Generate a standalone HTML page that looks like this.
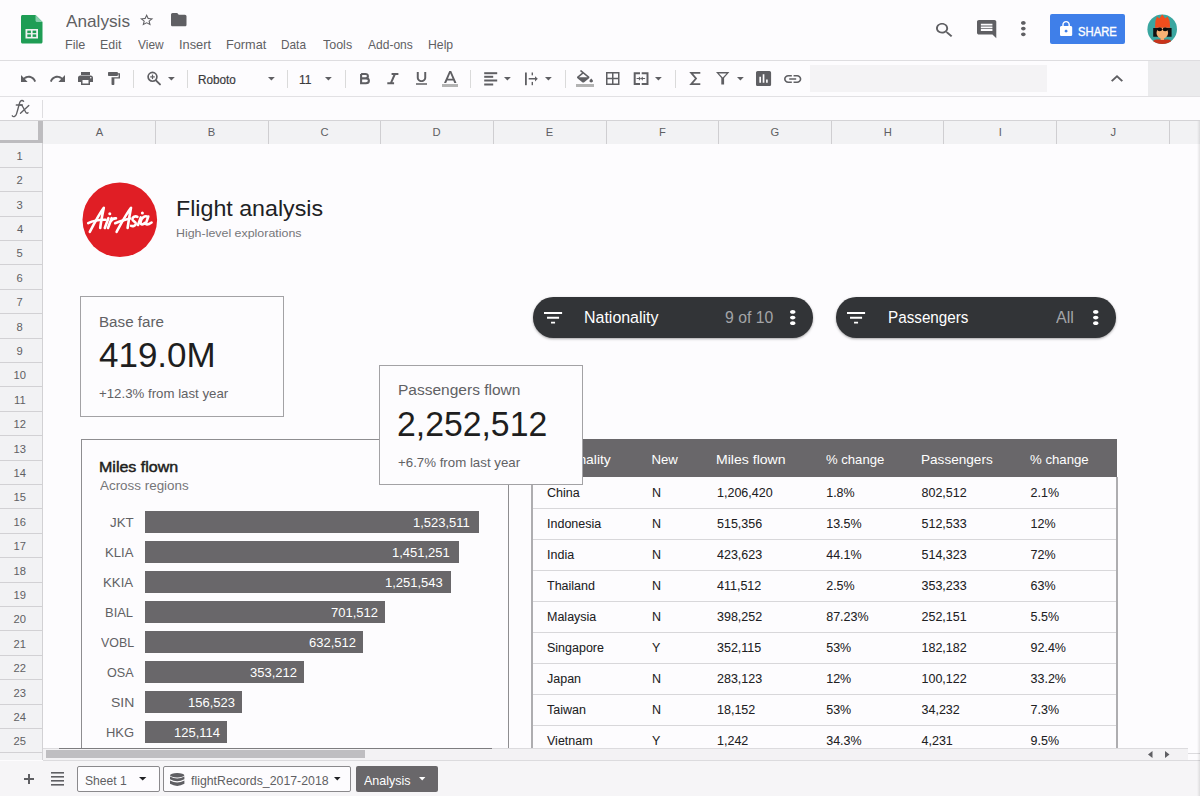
<!DOCTYPE html>
<html><head><meta charset="utf-8"><title>Analysis - Google Sheets</title>
<style>
html,body{margin:0;padding:0;width:1200px;height:796px;overflow:hidden;background:#fdfcfe;font-family:"Liberation Sans",sans-serif;}
.b{position:absolute;}
.ic{position:absolute;overflow:visible;}
.t{position:absolute;line-height:1;white-space:pre;font-family:"Liberation Sans",sans-serif;}
</style></head><body>
<svg class='ic' style='left:21px;top:15px;width:21.5px;height:28.5px' viewBox='0 0 21.5 28.5'>
<path d='M1.5 0H14.5L21.5 7V27C21.5 27.9 20.8 28.5 20 28.5H1.5C.7 28.5 0 27.9 0 27V1.5C0 .7 .7 0 1.5 0Z' fill='#1f9d55'/>
<path d='M14.5 0L21.5 7H16C15.2 7 14.5 6.3 14.5 5.5Z' fill='#87ceac'/>
<rect x='4.5' y='14' width='12.5' height='9.5' fill='#f1f1f1'/>
<rect x='6.3' y='15.6' width='3.6' height='2.5' fill='#1f9d55'/><rect x='11.6' y='15.6' width='3.6' height='2.5' fill='#1f9d55'/>
<rect x='6.3' y='19.4' width='3.6' height='2.5' fill='#1f9d55'/><rect x='11.6' y='19.4' width='3.6' height='2.5' fill='#1f9d55'/>
</svg>
<svg class='ic' style='left:140px;top:14.2px;width:13.300000000000011px;height:11.600000000000001px;' viewBox='2.05 2.05 19.9 18.9' preserveAspectRatio='none'><path d='M22 9.24l-7.19-.62L12 2 9.19 8.63 2 9.24l5.46 4.73L5.82 21 12 17.27 18.18 21l-1.63-7.03L22 9.24zM12 15.4l-3.76 2.27 1-4.28-3.32-2.88 4.38-.38L12 6.1l1.71 4.04 4.38.38-3.32 2.88 1 4.28L12 15.4z' fill='#5f5f63'/></svg>
<svg class='ic' style='left:170.8px;top:13px;width:15.5px;height:13.3px;' viewBox='2.0 4.0 20.0 16.0' preserveAspectRatio='none'><path d='M10 4H4c-1.1 0-1.99.9-1.99 2L2 18c0 1.1.9 2 2 2h16c1.1 0 2-.9 2-2V8c0-1.1-.9-2-2-2h-8l-2-2z' fill='#5f5f63'/></svg>
<svg class='ic' style='left:935.9px;top:22.5px;width:16.300000000000068px;height:14.0px;' viewBox='3.0 3.0 17.45 17.45' preserveAspectRatio='none'><path d='M15.5 14h-.79l-.28-.27C15.41 12.59 16 11.11 16 9.5 16 5.91 13.09 3 9.5 3S3 5.91 3 9.5 5.91 16 9.5 16c1.61 0 3.09-.59 4.23-1.57l.27.28v.79l5 4.99L20.49 19l-4.99-5zm-6 0C7.01 14 5 11.99 5 9.5S7.01 5 9.5 5 14 7.01 14 9.5 11.99 14 9.5 14z' fill='#5f5f63'/></svg>
<svg class='ic' style='left:976.5px;top:19.5px;width:19.299999999999955px;height:18.200000000000003px;' viewBox='2.0 2.0 20.0 19.95' preserveAspectRatio='none'><path d='M21.99 4c0-1.1-.89-2-1.99-2H4c-1.1 0-2 .9-2 2v12c0 1.1.9 2 2 2h14l4 4-.01-18zM18 14H6v-2h12v2zm0-3H6V9h12v2zm0-3H6V6h12v2z' fill='#5f5f63'/></svg>
<svg class='ic' style='left:1021px;top:21.3px;width:4.7000000000000455px;height:15.2px;' viewBox='10.0 4.0 4.0 16.0' preserveAspectRatio='none'><path d='M12 8c1.1 0 2-.9 2-2s-.9-2-2-2-2 .9-2 2 .9 2 2 2zm0 2c-1.1 0-2 .9-2 2s.9 2 2 2 2-.9 2-2-.9-2-2-2zm0 6c-1.1 0-2 .9-2 2s.9 2 2 2 2-.9 2-2-.9-2-2-2z' fill='#5f5f63'/></svg>
<div class='b' style='left:1050px;top:14px;width:75px;height:30px;background:#3f7fe9;border-radius:2px'></div>
<svg class='ic' style='left:1059.5px;top:20.9px;width:12.200000000000045px;height:15.100000000000001px;' viewBox='4.0 1.0 16.0 21.0' preserveAspectRatio='none'><path d='M18 8h-1V6c0-2.76-2.24-5-5-5S7 3.24 7 6v2H6c-1.1 0-2 .9-2 2v10c0 1.1.9 2 2 2h12c1.1 0 2-.9 2-2V10c0-1.1-.9-2-2-2zm-6 9c-1.1 0-2-.9-2-2s.9-2 2-2 2 .9 2 2-.9 2-2 2zm3.1-9H8.9V6c0-1.71 1.39-3.1 3.1-3.1 1.71 0 3.1 1.39 3.1 3.1v2z' fill='#fff'/></svg>
<svg class='ic' style='left:1147px;top:14px;width:30px;height:30px' viewBox='0 0 30 30'>
<defs><clipPath id='av'><circle cx='15.2' cy='15.2' r='14.8'/></clipPath></defs>
<g clip-path='url(#av)'>
<rect width='30' height='30' fill='#3aa6a0'/>
<path d='M6.2 14 H24.6 V22.7 H6.2Z' fill='#111'/>
<path d='M4.5 30 Q5.5 25.8 10 25.6 H20.5 Q25 25.8 26 30Z' fill='#c9331b'/>
<rect x='13.6' y='23' width='3.4' height='3' fill='#f3a96c'/>
<ellipse cx='15.3' cy='19' rx='5.8' ry='5.6' fill='#f7b274'/>
<path d='M8 13.8 L8.4 7 L10 2.6 L12.3 4.6 L15.2 0.3 L18.2 4.6 L20.6 2.6 L22.6 7 L23.2 13.8Z' fill='#f04d1d'/>
<ellipse cx='12.7' cy='15.4' rx='2.5' ry='1.8' fill='#0a0a0a'/><ellipse cx='18.1' cy='15.4' rx='2.5' ry='1.8' fill='#0a0a0a'/>
</g></svg>
<div class='b' style='left:0px;top:60px;width:1200px;height:1px;background:#dedde0'></div>
<div class='b' style='left:0px;top:96px;width:1200px;height:1px;background:#e2e1e4'></div>
<div class='b' style='left:1148px;top:61px;width:52px;height:35px;background:#ebebed'></div>
<div class='b' style='left:810px;top:64.5px;width:237px;height:27px;background:#f4f3f5'></div>
<svg class='ic' style='left:21.4px;top:74.5px;width:15.0px;height:6.900000000000006px;' viewBox='2.0 7.0 20.45 9.0' preserveAspectRatio='none'><path d='M12.5 8c-2.65 0-5.05.99-6.9 2.6L2 7v9h9l-3.62-3.62c1.39-1.16 3.16-1.88 5.12-1.88 3.54 0 6.550 2.31 7.6 5.5l2.37-.78C21.08 11.03 17.15 8 12.5 8z' fill='#5f5f63'/></svg>
<svg class='ic' style='left:50px;top:74.5px;width:15px;height:6.900000000000006px;' viewBox='1.55 7.0 20.45 9.0' preserveAspectRatio='none'><path d='M18.4 10.6C16.55 8.99 14.15 8 11.5 8c-4.65 0-8.58 3.03-9.96 7.22L3.9 16c1.05-3.19 4.05-5.5 7.6-5.5 1.95 0 3.73.72 5.12 1.880L13 16h9V7l-3.6 3.6z' fill='#5f5f63'/></svg>
<svg class='ic' style='left:78px;top:72px;width:15px;height:13px;' viewBox='2.0 3.0 20.0 18.0' preserveAspectRatio='none'><path d='M19 8H5c-1.66 0-3 1.34-3 3v6h4v4h12v-4h4v-6c0-1.66-1.34-3-3-3zm-3 11H8v-5h8v5zm3-7c-.55 0-1-.45-1-1s.45-1 1-1 1 .45 1 1-.45 1-1 1zm-1-9H6v4h12V3z' fill='#5f5f63'/></svg>
<svg class='ic' style='left:108px;top:72px;width:12px;height:13px;' viewBox='4.0 2.0 17.0 20.0' preserveAspectRatio='none'><path d='M18 4V3c0-.55-.45-1-1-1H5c-.55 0-1 .45-1 1v4c0 .55.45 1 1 1h12c.55 0 1-.45 1-1V6h1v4H9v11c0 .55.45 1 1 1h2c.55 0 1-.45 1-1v-9h8V4h-3z' fill='#5f5f63'/></svg>
<div class='b' style='left:133px;top:69.5px;width:1px;height:18px;background:#dadada'></div>
<div class='b' style='left:187px;top:69.5px;width:1px;height:18px;background:#dadada'></div>
<div class='b' style='left:287px;top:69.5px;width:1px;height:18px;background:#dadada'></div>
<div class='b' style='left:344.5px;top:69.5px;width:1px;height:18px;background:#dadada'></div>
<div class='b' style='left:469.5px;top:69.5px;width:1px;height:18px;background:#dadada'></div>
<div class='b' style='left:564.5px;top:69.5px;width:1px;height:18px;background:#dadada'></div>
<div class='b' style='left:675px;top:69.5px;width:1px;height:18px;background:#dadada'></div>
<svg class='ic' style='left:146px;top:70px;width:16px;height:16px' viewBox='0 0 16 16'><circle cx='6.5' cy='6.85' r='4.4' stroke='#5f5f63' stroke-width='1.7' fill='none'/><rect x='4.2' y='6.3' width='4.6' height='1.2' fill='#5f5f63'/><rect x='5.9' y='4.6' width='1.2' height='4.5' fill='#5f5f63'/><path d='M9.9 10.3L14 14.4' stroke='#5f5f63' stroke-width='1.9' stroke-linecap='round'/></svg>
<svg class='ic' style='left:167.6px;top:76.5px;width:6.800000000000011px;height:3.5px;' viewBox='7.0 10.0 10.0 5.0' preserveAspectRatio='none'><path d='M7 10l5 5 5-5z' fill='#5f5f63'/></svg>
<svg class='ic' style='left:267.5px;top:76.5px;width:6.800000000000011px;height:3.5px;' viewBox='7.0 10.0 10.0 5.0' preserveAspectRatio='none'><path d='M7 10l5 5 5-5z' fill='#5f5f63'/></svg>
<svg class='ic' style='left:325px;top:76.5px;width:6.800000000000011px;height:3.5px;' viewBox='7.0 10.0 10.0 5.0' preserveAspectRatio='none'><path d='M7 10l5 5 5-5z' fill='#5f5f63'/></svg>
<svg class='ic' style='left:503.7px;top:76.5px;width:6.800000000000011px;height:3.5px;' viewBox='7.0 10.0 10.0 5.0' preserveAspectRatio='none'><path d='M7 10l5 5 5-5z' fill='#5f5f63'/></svg>
<svg class='ic' style='left:545px;top:76.5px;width:6.7999999999999545px;height:3.5px;' viewBox='7.0 10.0 10.0 5.0' preserveAspectRatio='none'><path d='M7 10l5 5 5-5z' fill='#5f5f63'/></svg>
<svg class='ic' style='left:655px;top:76.5px;width:6.7999999999999545px;height:3.5px;' viewBox='7.0 10.0 10.0 5.0' preserveAspectRatio='none'><path d='M7 10l5 5 5-5z' fill='#5f5f63'/></svg>
<svg class='ic' style='left:736.8px;top:76.5px;width:6.7999999999999545px;height:3.5px;' viewBox='7.0 10.0 10.0 5.0' preserveAspectRatio='none'><path d='M7 10l5 5 5-5z' fill='#5f5f63'/></svg>
<svg class='ic' style='left:359.8px;top:72.5px;width:10px;height:11.3px' viewBox='0 0 10 11.3'><path d='M1.1 1V10.3H5.9C7.9 10.3 8.9 9.3 8.9 7.8C8.9 6.3 7.9 5.4 5.9 5.4H1.1M1.1 5.4H5.4C7 5.4 7.9 4.6 7.9 3.2C7.9 1.8 7 1 5.4 1H1.1' stroke='#5f5f63' stroke-width='2.1' fill='none'/></svg>
<svg class='ic' style='left:387.3px;top:72.5px;width:11.7px;height:11.3px' viewBox='0 0 11.7 11.3'><path d='M4.6 1H11.4M7.9 1L3.8 10.3M0.3 10.3H7.1' stroke='#5f5f63' stroke-width='2' fill='none'/></svg>
<svg class='ic' style='left:416px;top:72px;width:11px;height:12.75px;' viewBox='5.0 3.0 14.0 18.0' preserveAspectRatio='none'><path d='M12 17c3.31 0 6-2.69 6-6V3h-2.5v8c0 1.93-1.57 3.5-3.5 3.5S8.5 12.93 8.5 11V3H6v8c0 3.31 2.69 6 6 6zm-7 2v2h14v-2H5z' fill='#5f5f63'/></svg>
<svg class='ic' style='left:443.5px;top:71px;width:12.5px;height:12px;' viewBox='5.5 3.0 13.0 14.0' preserveAspectRatio='none'><path d='M11 3L5.5 17h2.25l1.12-3h6.25l1.12 3h2.25L13 3h-2zm-1.38 9L12 5.67 14.38 12H9.62z' fill='#5f5f63'/></svg>
<div class='b' style='left:441.5px;top:84px;width:16.5px;height:2.6px;background:#b3b3b3'></div>
<svg class='ic' style='left:483.5px;top:71.5px;width:14px;height:14px' viewBox='0 0 14 14'><rect x='.2' y='.2' width='13' height='2' fill='#5f5f63'/><rect x='.2' y='3.8' width='9' height='2' fill='#5f5f63'/><rect x='.2' y='7.5' width='13' height='2' fill='#5f5f63'/><rect x='.2' y='11.5' width='9' height='2' fill='#5f5f63'/></svg>
<svg class='ic' style='left:524px;top:71.5px;width:14px;height:13.5px' viewBox='0 0 14 13.5'>
<rect x='1' y='.5' width='1.8' height='12.7' fill='#5f5f63'/>
<rect x='7.6' y='.5' width='1.4' height='2.8' fill='#5f5f63'/><rect x='7.6' y='9.9' width='1.4' height='3.3' fill='#5f5f63'/>
<path d='M4.7 6.1H11V4.2L13.8 6.8 11 9.4V7.5H4.7Z' fill='#5f5f63'/></svg>
<svg class='ic' style='left:577px;top:70px;width:16px;height:12.5px;' viewBox='3.0 0.0 18.0 17.0' preserveAspectRatio='none'><path d='M16.56 8.94L7.62 0 6.21 1.41l2.38 2.38-5.15 5.15c-.59.59-.59 1.54 0 2.12l5.5 5.5c.29.29.68.44 1.06.44s.77-.15 1.06-.44l5.5-5.5c.59-.58.59-1.53 0-2.12zM5.21 10L10 5.21 14.79 10H5.21zM19 11.5s-2 2.17-2 3.5c0 1.1.9 2 2 2s2-.9 2-2c0-1.33-2-3.5-2-3.5z' fill='#5f5f63'/></svg>
<div class='b' style='left:576.4px;top:84px;width:17.3px;height:2.6px;background:#b3b3b3'></div>
<svg class='ic' style='left:606.3px;top:71.7px;width:13.5px;height:13.049999999999997px;' viewBox='3.0 3.0 18.0 18.0' preserveAspectRatio='none'><path d='M3 3v18h18V3H3zm8 16H5v-6h6v6zm0-8H5V5h6v6zm8 8h-6v-6h6v6zm0-8h-6V5h6v6z' fill='#5f5f63'/></svg>
<svg class='ic' style='left:633.3px;top:71.7px;width:15.7px;height:13px' viewBox='0 0 15.7 13'>
<path d='M7 .3H.7V12.9H7V10.9H2.7V2.3H7Z M8.7 .3H15.5V12.9H8.7V10.9H13.5V2.3H8.7Z' fill='#5f5f63'/>
<path d='M3.6 6.1H5.9V4.5L8 6.6 5.9 8.7V7.1H3.6Z M12.1 6.1H9.8V4.5L7.7 6.6 9.8 8.7V7.1H12.1Z' fill='#5f5f63'/></svg>
<svg class='ic' style='left:689.5px;top:72px;width:10.5px;height:13px' viewBox='0 0 10.5 13'><path d='M10.3 .9H1.2L6 6.5 1.2 12.1H10.3' stroke='#5f5f63' stroke-width='1.8' fill='none' stroke-linejoin='miter'/></svg>
<svg class='ic' style='left:716px;top:72px;width:13.4px;height:12.5px' viewBox='0 0 13.4 12.5'>
<path d='M0 0H13.4L8.1 6V12.5H5.3V6Z M2.9 1.6L6.7 5.6 10.5 1.6Z' fill='#5f5f63' fill-rule='evenodd'/></svg>
<svg class='ic' style='left:756.4px;top:70.8px;width:15.100000000000023px;height:15.100000000000009px;' viewBox='3.0 3.0 18.0 18.0' preserveAspectRatio='none'><path d='M19 3H5c-1.1 0-2 .9-2 2v14c0 1.1.9 2 2 2h14c1.1 0 2-.9 2-2V5c0-1.1-.9-2-2-2zM9 17H7v-7h2v7zm4 0h-2V7h2v10zm4 0h-2v-4h2v4z' fill='#5f5f63'/></svg>
<svg class='ic' style='left:784px;top:74.6px;width:17.399999999999977px;height:7.900000000000006px;' viewBox='2.0 7.0 20.0 10.0' preserveAspectRatio='none'><path d='M3.9 12c0-1.71 1.39-3.1 3.1-3.1h4V7H7c-2.76 0-5 2.24-5 5s2.24 5 5 5h4v-1.9H7c-1.71 0-3.1-1.39-3.1-3.1zM8 13h8v-2H8v2zm9-6h-4v1.9h4c1.71 0 3.1 1.39 3.1 3.1s-1.39 3.1-3.1 3.1h-4V17h4c2.76 0 5-2.24 5-5s-2.24-5-5-5z' fill='#5f5f63'/></svg>
<svg class='ic' style='left:1110.7px;top:75px;width:12.0px;height:6.700000000000003px;' viewBox='6.0 8.0 12.0 7.4' preserveAspectRatio='none'><path d='M12 8l-6 6 1.41 1.41L12 10.83l4.59 4.58L18 14z' fill='#5f5f63'/></svg>
<svg class='ic' style='left:0;top:90px;width:60px;height:35px' viewBox='0 90 60 35'><g stroke='#5f5f63' stroke-width='1.35' fill='none' stroke-linecap='round'><path d='M23.6 101.3C22.8 100.1 20.6 100 19.8 102.2C19 104.5 17.8 110 16.6 113.6C15.8 116.2 13.6 117.6 12.3 115.8'/><path d='M16.3 105H22.4'/><path d='M20 105.2C21.3 104.6 22 105 22.8 106.8L25.6 112C26.3 113.3 27.2 113.6 28 112.8'/><path d='M28.8 105.4L20.5 113.2'/></g></svg>
<div class='b' style='left:42px;top:100px;width:1px;height:18px;background:#dedde0'></div>
<div class='b' style='left:0px;top:120px;width:1200px;height:1px;background:#d4d3d6'></div>
<div class='b' style='left:0px;top:121px;width:1200px;height:22.6px;background:#f2f2f4'></div>
<div class='b' style='left:0px;top:143px;width:42px;height:617px;background:#f2f2f4'></div>
<div class='b' style='left:42px;top:143px;width:1px;height:617px;background:#d2d1d4'></div>
<div class='b' style='left:38.3px;top:121px;width:4.5px;height:22.4px;background:#bdbcbf'></div>
<div class='b' style='left:0px;top:139.5px;width:42.8px;height:3.6px;background:#bdbcbf'></div>
<div class='b' style='left:155.0px;top:121px;width:1px;height:22.6px;background:#cfced1'></div>
<div class='b' style='left:267.64px;top:121px;width:1px;height:22.6px;background:#cfced1'></div>
<div class='b' style='left:380.28px;top:121px;width:1px;height:22.6px;background:#cfced1'></div>
<div class='b' style='left:492.92px;top:121px;width:1px;height:22.6px;background:#cfced1'></div>
<div class='b' style='left:605.56px;top:121px;width:1px;height:22.6px;background:#cfced1'></div>
<div class='b' style='left:718.2px;top:121px;width:1px;height:22.6px;background:#cfced1'></div>
<div class='b' style='left:830.84px;top:121px;width:1px;height:22.6px;background:#cfced1'></div>
<div class='b' style='left:943.48px;top:121px;width:1px;height:22.6px;background:#cfced1'></div>
<div class='b' style='left:1056.12px;top:121px;width:1px;height:22.6px;background:#cfced1'></div>
<div class='b' style='left:1168.76px;top:121px;width:1px;height:22.6px;background:#cfced1'></div>
<div class='b' style='left:0px;top:166.7px;width:42px;height:1px;background:#d2d1d4'></div>
<div class='b' style='left:0px;top:191.1px;width:42px;height:1px;background:#d2d1d4'></div>
<div class='b' style='left:0px;top:215.5px;width:42px;height:1px;background:#d2d1d4'></div>
<div class='b' style='left:0px;top:239.9px;width:42px;height:1px;background:#d2d1d4'></div>
<div class='b' style='left:0px;top:264.3px;width:42px;height:1px;background:#d2d1d4'></div>
<div class='b' style='left:0px;top:288.7px;width:42px;height:1px;background:#d2d1d4'></div>
<div class='b' style='left:0px;top:313.1px;width:42px;height:1px;background:#d2d1d4'></div>
<div class='b' style='left:0px;top:337.5px;width:42px;height:1px;background:#d2d1d4'></div>
<div class='b' style='left:0px;top:361.9px;width:42px;height:1px;background:#d2d1d4'></div>
<div class='b' style='left:0px;top:386.3px;width:42px;height:1px;background:#d2d1d4'></div>
<div class='b' style='left:0px;top:410.7px;width:42px;height:1px;background:#d2d1d4'></div>
<div class='b' style='left:0px;top:435.1px;width:42px;height:1px;background:#d2d1d4'></div>
<div class='b' style='left:0px;top:459.5px;width:42px;height:1px;background:#d2d1d4'></div>
<div class='b' style='left:0px;top:483.9px;width:42px;height:1px;background:#d2d1d4'></div>
<div class='b' style='left:0px;top:508.3px;width:42px;height:1px;background:#d2d1d4'></div>
<div class='b' style='left:0px;top:532.7px;width:42px;height:1px;background:#d2d1d4'></div>
<div class='b' style='left:0px;top:557.1px;width:42px;height:1px;background:#d2d1d4'></div>
<div class='b' style='left:0px;top:581.5px;width:42px;height:1px;background:#d2d1d4'></div>
<div class='b' style='left:0px;top:605.9px;width:42px;height:1px;background:#d2d1d4'></div>
<div class='b' style='left:0px;top:630.3px;width:42px;height:1px;background:#d2d1d4'></div>
<div class='b' style='left:0px;top:654.7px;width:42px;height:1px;background:#d2d1d4'></div>
<div class='b' style='left:0px;top:679.1px;width:42px;height:1px;background:#d2d1d4'></div>
<div class='b' style='left:0px;top:703.5px;width:42px;height:1px;background:#d2d1d4'></div>
<div class='b' style='left:0px;top:727.9px;width:42px;height:1px;background:#d2d1d4'></div>
<div class='b' style='left:0px;top:752.3px;width:42px;height:1px;background:#d2d1d4'></div>
<svg class='ic' style='left:0;top:0;width:1200px;height:300px' viewBox='0 0 1200 300'>
<circle cx='119.8' cy='219.8' r='37.3' fill='#e01e25'/>
<g stroke='#fff' stroke-width='2.6' fill='none' stroke-linecap='round' stroke-linejoin='round'>
<path d='M89.8 231.8 C95 222 99.5 213.5 103.8 207.8 C102.5 214 101 221 100.2 228'/>
<path d='M88.2 223.2 C93 220.8 99 219.6 105.5 219.8'/>
<path d='M108.4 218.2 L104.8 228'/>
<path d='M111.6 218.2 L108 228 M110.4 221.8 C111.8 219.2 113.5 218 116 218.4'/>
<path d='M116.6 231.8 C122 222 126.5 213.5 131 207.8 C129.8 214 128.6 221 127.6 228'/>
<path d='M115.2 223.2 C120 221.4 125 219.6 130 218.6'/>
<path d='M137.4 216.9 C135.4 215.7 132.2 216.9 132.4 219.4 C132.6 221.4 136.2 221.6 135.8 224 C135.4 226.1 132.6 226.5 131.1 225.9'/>
<path d='M140.8 217.4 L138 225'/>
<path d='M147.8 216.8 C145 215.2 141.4 217.6 140.7 221.4 C140.1 224.4 142.4 225.4 144.8 222.9 M148.3 216.5 L146 223.2 C145.6 224.9 147.6 225.3 151.6 222.5'/>
</g>
<circle cx='109.8' cy='213.8' r='1.5' fill='#fff'/><circle cx='142.4' cy='213' r='1.5' fill='#fff'/>
</svg>
<div class='b' style='left:80.35px;top:296.2px;width:203.9px;height:120.9px;border:1.3px solid #a3a2a5;box-sizing:border-box'></div>
<div class='b' style='left:532.5px;top:297px;width:280.5px;height:40.5px;background:#323437;border-radius:20.25px;box-shadow:0 1px 2.5px rgba(0,0,0,0.35)'></div>
<div class='b' style='left:835.5px;top:297px;width:280.75px;height:40.5px;background:#323437;border-radius:20.25px;box-shadow:0 1px 2.5px rgba(0,0,0,0.35)'></div>
<svg class='ic' style='left:544px;top:311.6px;width:18.100000000000023px;height:11.599999999999966px;' viewBox='3.0 6.0 18.0 12.0' preserveAspectRatio='none'><path d='M10 18h4v-2h-4v2zM3 6v2h18V6H3zm3 7h12v-2H6v2z' fill='#fff'/></svg>
<svg class='ic' style='left:847px;top:311.6px;width:18.100000000000023px;height:11.599999999999966px;' viewBox='3.0 6.0 18.0 12.0' preserveAspectRatio='none'><path d='M10 18h4v-2h-4v2zM3 6v2h18V6H3zm3 7h12v-2H6v2z' fill='#fff'/></svg>
<svg class='ic' style='left:789.5px;top:310px;width:5.5px;height:15px;' viewBox='10.0 4.0 4.0 16.0' preserveAspectRatio='none'><path d='M12 8c1.1 0 2-.9 2-2s-.9-2-2-2-2 .9-2 2 .9 2 2 2zm0 2c-1.1 0-2 .9-2 2s.9 2 2 2 2-.9 2-2-.9-2-2-2zm0 6c-1.1 0-2 .9-2 2s.9 2 2 2 2-.9 2-2-.9-2-2-2z' fill='#fff'/></svg>
<svg class='ic' style='left:1093px;top:310px;width:5.5px;height:15px;' viewBox='10.0 4.0 4.0 16.0' preserveAspectRatio='none'><path d='M12 8c1.1 0 2-.9 2-2s-.9-2-2-2-2 .9-2 2 .9 2 2 2zm0 2c-1.1 0-2 .9-2 2s.9 2 2 2 2-.9 2-2-.9-2-2-2zm0 6c-1.1 0-2 .9-2 2s.9 2 2 2 2-.9 2-2-.9-2-2-2z' fill='#fff'/></svg>
<div class='b' style='left:80.75px;top:439.1px;width:428.3px;height:320px;border:1.3px solid #8e8d90;border-bottom:none;box-sizing:border-box'></div>
<div class='b' style='left:144.8px;top:510.9px;width:334.0px;height:21.8px;background:#69676a'></div>
<div class='b' style='left:144.8px;top:540.9px;width:314.2px;height:21.8px;background:#69676a'></div>
<div class='b' style='left:144.8px;top:570.9px;width:305.8px;height:21.8px;background:#69676a'></div>
<div class='b' style='left:144.8px;top:600.9px;width:240.09999999999997px;height:21.8px;background:#69676a'></div>
<div class='b' style='left:144.8px;top:630.9px;width:218.45px;height:21.8px;background:#69676a'></div>
<div class='b' style='left:144.8px;top:660.9px;width:159.2px;height:21.8px;background:#69676a'></div>
<div class='b' style='left:144.8px;top:690.9px;width:97.19999999999999px;height:21.8px;background:#69676a'></div>
<div class='b' style='left:144.8px;top:720.9px;width:82.19999999999999px;height:21.8px;background:#69676a'></div>
<div class='b' style='left:532px;top:439.4px;width:585px;height:37.8px;background:#69676a'></div>
<div class='b' style='left:531px;top:477px;width:1.6px;height:272px;background:#aeadb0'></div>
<div class='b' style='left:1116.3px;top:477px;width:1.6px;height:272px;background:#aeadb0'></div>
<div class='b' style='left:532.6px;top:507.6px;width:583.7px;height:1px;background:#d8d7da'></div>
<div class='b' style='left:532.6px;top:538.6px;width:583.7px;height:1px;background:#d8d7da'></div>
<div class='b' style='left:532.6px;top:569.6px;width:583.7px;height:1px;background:#d8d7da'></div>
<div class='b' style='left:532.6px;top:600.6px;width:583.7px;height:1px;background:#d8d7da'></div>
<div class='b' style='left:532.6px;top:631.6px;width:583.7px;height:1px;background:#d8d7da'></div>
<div class='b' style='left:532.6px;top:662.6px;width:583.7px;height:1px;background:#d8d7da'></div>
<div class='b' style='left:532.6px;top:693.6px;width:583.7px;height:1px;background:#d8d7da'></div>
<div class='b' style='left:532.6px;top:724.6px;width:583.7px;height:1px;background:#d8d7da'></div>
<span class='t' style='left:66.30px;top:14.00px;font-size:16.96px;font-weight:400;color:#5f6063;transform:scaleX(1.0145);transform-origin:0 0;'>Analysis</span>
<span class='t' style='left:65.26px;top:39.20px;font-size:12.17px;font-weight:400;color:#5f6063;transform:scaleX(1.0389);transform-origin:0 0;'>File</span>
<span class='t' style='left:99.78px;top:39.20px;font-size:12.17px;font-weight:400;color:#5f6063;transform:scaleX(1.0200);transform-origin:0 0;'>Edit</span>
<span class='t' style='left:137.50px;top:39.20px;font-size:12.17px;font-weight:400;color:#5f6063;transform:scaleX(0.9808);transform-origin:0 0;'>View</span>
<span class='t' style='left:178.64px;top:39.20px;font-size:12.17px;font-weight:400;color:#5f6063;transform:scaleX(1.0552);transform-origin:0 0;'>Insert</span>
<span class='t' style='left:225.65px;top:39.20px;font-size:12.17px;font-weight:400;color:#5f6063;transform:scaleX(1.0459);transform-origin:0 0;'>Format</span>
<span class='t' style='left:280.53px;top:39.20px;font-size:12.17px;font-weight:400;color:#5f6063;transform:scaleX(0.9720);transform-origin:0 0;'>Data</span>
<span class='t' style='left:322.50px;top:39.20px;font-size:12.17px;font-weight:400;color:#5f6063;transform:scaleX(1.0268);transform-origin:0 0;'>Tools</span>
<span class='t' style='left:367.50px;top:39.20px;font-size:12.17px;font-weight:400;color:#5f6063;transform:scaleX(0.9889);transform-origin:0 0;'>Add-ons</span>
<span class='t' style='left:427.74px;top:39.20px;font-size:12.17px;font-weight:400;color:#5f6063;transform:scaleX(1.0062);transform-origin:0 0;'>Help</span>
<span class='t' style='left:1077.82px;top:26.00px;font-size:12.75px;font-weight:400;color:#fff;transform:scaleX(0.8837);transform-origin:0 0;-webkit-text-stroke:0.35px currentColor;'>SHARE</span>
<span class='t' style='left:198.36px;top:74.20px;font-size:12.46px;font-weight:400;color:#3a3a3c;transform:scaleX(0.9410);transform-origin:0 0;-webkit-text-stroke:0.2px currentColor;'>Roboto</span>
<span class='t' style='left:299.04px;top:74.20px;font-size:12.46px;font-weight:400;color:#3a3a3c;transform:scaleX(0.9636);transform-origin:0 0;-webkit-text-stroke:0.2px currentColor;'>11</span>
<span class='t' style='left:95.68px;top:127.00px;font-size:11.2px;font-weight:400;color:#5f5f63;'>A</span>
<span class='t' style='left:207.82px;top:127.00px;font-size:11.2px;font-weight:400;color:#5f5f63;'>B</span>
<span class='t' style='left:320.46px;top:127.00px;font-size:11.2px;font-weight:400;color:#5f5f63;'>C</span>
<span class='t' style='left:432.60px;top:127.00px;font-size:11.2px;font-weight:400;color:#5f5f63;'>D</span>
<span class='t' style='left:545.74px;top:127.00px;font-size:11.2px;font-weight:400;color:#5f5f63;'>E</span>
<span class='t' style='left:658.88px;top:127.00px;font-size:11.2px;font-weight:400;color:#5f5f63;'>F</span>
<span class='t' style='left:770.52px;top:127.00px;font-size:11.2px;font-weight:400;color:#5f5f63;'>G</span>
<span class='t' style='left:883.66px;top:127.00px;font-size:11.2px;font-weight:400;color:#5f5f63;'>H</span>
<span class='t' style='left:998.80px;top:127.00px;font-size:11.2px;font-weight:400;color:#5f5f63;'>I</span>
<span class='t' style='left:1110.44px;top:127.00px;font-size:11.2px;font-weight:400;color:#5f5f63;'>J</span>
<span class='t' style='left:16.50px;top:150.80px;font-size:11.2px;font-weight:400;color:#5f5f63;'>1</span>
<span class='t' style='left:16.50px;top:175.20px;font-size:11.2px;font-weight:400;color:#5f5f63;'>2</span>
<span class='t' style='left:16.50px;top:199.60px;font-size:11.2px;font-weight:400;color:#5f5f63;'>3</span>
<span class='t' style='left:17.00px;top:224.00px;font-size:11.2px;font-weight:400;color:#5f5f63;'>4</span>
<span class='t' style='left:16.50px;top:248.40px;font-size:11.2px;font-weight:400;color:#5f5f63;'>5</span>
<span class='t' style='left:16.50px;top:272.80px;font-size:11.2px;font-weight:400;color:#5f5f63;'>6</span>
<span class='t' style='left:16.50px;top:297.20px;font-size:11.2px;font-weight:400;color:#5f5f63;'>7</span>
<span class='t' style='left:16.50px;top:321.60px;font-size:11.2px;font-weight:400;color:#5f5f63;'>8</span>
<span class='t' style='left:16.50px;top:346.00px;font-size:11.2px;font-weight:400;color:#5f5f63;'>9</span>
<span class='t' style='left:13.50px;top:370.40px;font-size:11.2px;font-weight:400;color:#5f5f63;'>10</span>
<span class='t' style='left:14.00px;top:394.80px;font-size:11.2px;font-weight:400;color:#5f5f63;'>11</span>
<span class='t' style='left:13.50px;top:419.20px;font-size:11.2px;font-weight:400;color:#5f5f63;'>12</span>
<span class='t' style='left:13.50px;top:443.60px;font-size:11.2px;font-weight:400;color:#5f5f63;'>13</span>
<span class='t' style='left:13.50px;top:468.00px;font-size:11.2px;font-weight:400;color:#5f5f63;'>14</span>
<span class='t' style='left:13.50px;top:492.40px;font-size:11.2px;font-weight:400;color:#5f5f63;'>15</span>
<span class='t' style='left:13.50px;top:516.80px;font-size:11.2px;font-weight:400;color:#5f5f63;'>16</span>
<span class='t' style='left:13.50px;top:541.20px;font-size:11.2px;font-weight:400;color:#5f5f63;'>17</span>
<span class='t' style='left:13.50px;top:565.60px;font-size:11.2px;font-weight:400;color:#5f5f63;'>18</span>
<span class='t' style='left:13.50px;top:590.00px;font-size:11.2px;font-weight:400;color:#5f5f63;'>19</span>
<span class='t' style='left:13.50px;top:614.40px;font-size:11.2px;font-weight:400;color:#5f5f63;'>20</span>
<span class='t' style='left:13.50px;top:638.80px;font-size:11.2px;font-weight:400;color:#5f5f63;'>21</span>
<span class='t' style='left:13.50px;top:663.20px;font-size:11.2px;font-weight:400;color:#5f5f63;'>22</span>
<span class='t' style='left:13.50px;top:687.60px;font-size:11.2px;font-weight:400;color:#5f5f63;'>23</span>
<span class='t' style='left:13.50px;top:712.00px;font-size:11.2px;font-weight:400;color:#5f5f63;'>24</span>
<span class='t' style='left:13.50px;top:736.40px;font-size:11.2px;font-weight:400;color:#5f5f63;'>25</span>
<span class='t' style='left:175.95px;top:198.00px;font-size:22.61px;font-weight:400;color:#202124;transform:scaleX(1.0262);transform-origin:0 0;'>Flight analysis</span>
<span class='t' style='left:175.93px;top:228.30px;font-size:11.59px;font-weight:400;color:#76767a;transform:scaleX(1.0716);transform-origin:0 0;'>High-level explorations</span>
<span class='t' style='left:99.32px;top:313.70px;font-size:15.51px;font-weight:400;color:#616164;transform:scaleX(0.9785);transform-origin:0 0;'>Base fare</span>
<span class='t' style='left:99.29px;top:338.00px;font-size:34.49px;font-weight:400;color:#1e1e20;transform:scaleX(1.0144);transform-origin:0 0;'>419.0M</span>
<span class='t' style='left:98.76px;top:387.20px;font-size:13.33px;font-weight:400;color:#616164;transform:scaleX(0.9942);transform-origin:0 0;'>+12.3% from last year</span>
<span class='t' style='left:583.98px;top:310.25px;font-size:15.58px;font-weight:400;color:#ffffff;transform:scaleX(1.0243);transform-origin:0 0;'>Nationality</span>
<span class='t' style='left:724.99px;top:310.25px;font-size:15.58px;font-weight:400;color:#a3a4a7;transform:scaleX(1.0109);transform-origin:0 0;'>9 of 10</span>
<span class='t' style='left:887.77px;top:310.25px;font-size:15.58px;font-weight:400;color:#ffffff;transform:scaleX(0.9784);transform-origin:0 0;'>Passengers</span>
<span class='t' style='left:1056.00px;top:310.25px;font-size:15.58px;font-weight:400;color:#a3a4a7;transform:scaleX(1.0312);transform-origin:0 0;'>All</span>
<span class='t' style='left:98.86px;top:459.70px;font-size:14.06px;font-weight:400;color:#1e1e20;transform:scaleX(1.1397);transform-origin:0 0;-webkit-text-stroke:0.45px currentColor;'>Miles flown</span>
<span class='t' style='left:100.00px;top:479.50px;font-size:12.61px;font-weight:400;color:#757578;transform:scaleX(1.0639);transform-origin:0 0;'>Across regions</span>
<span class='t' style='left:110.00px;top:515.70px;font-size:13.33px;font-weight:400;color:#616164;'>JKT</span>
<span class='t' style='left:412.94px;top:515.80px;font-size:13.4px;font-weight:400;color:#ffffff;transform:scaleX(0.9700);transform-origin:0 0;'>1,523,511</span>
<span class='t' style='left:104.52px;top:545.70px;font-size:13.33px;font-weight:400;color:#616164;transform:scaleX(0.9821);transform-origin:0 0;'>KLIA</span>
<span class='t' style='left:392.27px;top:545.80px;font-size:13.4px;font-weight:400;color:#ffffff;transform:scaleX(0.9700);transform-origin:0 0;'>1,451,251</span>
<span class='t' style='left:103.21px;top:575.70px;font-size:13.33px;font-weight:400;color:#616164;transform:scaleX(0.9931);transform-origin:0 0;'>KKIA</span>
<span class='t' style='left:385.17px;top:575.80px;font-size:13.4px;font-weight:400;color:#ffffff;transform:scaleX(0.9700);transform-origin:0 0;'>1,251,543</span>
<span class='t' style='left:104.83px;top:605.70px;font-size:13.33px;font-weight:400;color:#616164;transform:scaleX(0.9714);transform-origin:0 0;'>BIAL</span>
<span class='t' style='left:330.64px;top:605.80px;font-size:13.4px;font-weight:400;color:#ffffff;transform:scaleX(0.9700);transform-origin:0 0;'>701,512</span>
<span class='t' style='left:100.50px;top:635.70px;font-size:13.33px;font-weight:400;color:#616164;transform:scaleX(0.9286);transform-origin:0 0;'>VOBL</span>
<span class='t' style='left:308.94px;top:635.80px;font-size:13.4px;font-weight:400;color:#ffffff;transform:scaleX(0.9700);transform-origin:0 0;'>632,512</span>
<span class='t' style='left:106.56px;top:665.70px;font-size:13.33px;font-weight:400;color:#616164;transform:scaleX(0.9444);transform-origin:0 0;'>OSA</span>
<span class='t' style='left:249.69px;top:665.80px;font-size:13.4px;font-weight:400;color:#ffffff;transform:scaleX(0.9700);transform-origin:0 0;'>353,212</span>
<span class='t' style='left:110.95px;top:695.70px;font-size:13.33px;font-weight:400;color:#616164;transform:scaleX(1.0500);transform-origin:0 0;'>SIN</span>
<span class='t' style='left:187.69px;top:695.80px;font-size:13.4px;font-weight:400;color:#ffffff;transform:scaleX(0.9700);transform-origin:0 0;'>156,523</span>
<span class='t' style='left:105.78px;top:725.70px;font-size:13.33px;font-weight:400;color:#616164;transform:scaleX(0.9722);transform-origin:0 0;'>HKG</span>
<span class='t' style='left:173.66px;top:725.80px;font-size:13.4px;font-weight:400;color:#ffffff;transform:scaleX(0.9700);transform-origin:0 0;'>125,114</span>
<span class='t' style='left:546.45px;top:452.80px;font-size:13.19px;font-weight:400;color:#ffffff;transform:scaleX(1.0525);transform-origin:0 0;'>Nationality</span>
<span class='t' style='left:651.50px;top:452.80px;font-size:13.19px;font-weight:400;color:#ffffff;'>New</span>
<span class='t' style='left:716.43px;top:452.80px;font-size:13.19px;font-weight:400;color:#ffffff;transform:scaleX(1.0672);transform-origin:0 0;'>Miles flown</span>
<span class='t' style='left:825.71px;top:452.80px;font-size:13.19px;font-weight:400;color:#ffffff;transform:scaleX(0.9930);transform-origin:0 0;'>% change</span>
<span class='t' style='left:920.97px;top:452.80px;font-size:13.19px;font-weight:400;color:#ffffff;transform:scaleX(1.0294);transform-origin:0 0;'>Passengers</span>
<span class='t' style='left:1030.00px;top:452.80px;font-size:13.19px;font-weight:400;color:#ffffff;'>% change</span>
<span class='t' style='left:547.00px;top:487.10px;font-size:12.5px;font-weight:400;color:#202022;-webkit-text-stroke:0.05px currentColor;'>China</span>
<span class='t' style='left:652.00px;top:487.10px;font-size:12.5px;font-weight:400;color:#202022;-webkit-text-stroke:0.05px currentColor;'>N</span>
<span class='t' style='left:717.00px;top:487.10px;font-size:12.5px;font-weight:400;color:#202022;-webkit-text-stroke:0.05px currentColor;'>1,206,420</span>
<span class='t' style='left:826.20px;top:487.10px;font-size:12.5px;font-weight:400;color:#202022;-webkit-text-stroke:0.05px currentColor;'>1.8%</span>
<span class='t' style='left:921.50px;top:487.10px;font-size:12.5px;font-weight:400;color:#202022;-webkit-text-stroke:0.05px currentColor;'>802,512</span>
<span class='t' style='left:1030.50px;top:487.10px;font-size:12.5px;font-weight:400;color:#202022;-webkit-text-stroke:0.05px currentColor;'>2.1%</span>
<span class='t' style='left:547.00px;top:518.10px;font-size:12.5px;font-weight:400;color:#202022;-webkit-text-stroke:0.05px currentColor;'>Indonesia</span>
<span class='t' style='left:652.00px;top:518.10px;font-size:12.5px;font-weight:400;color:#202022;-webkit-text-stroke:0.05px currentColor;'>N</span>
<span class='t' style='left:717.00px;top:518.10px;font-size:12.5px;font-weight:400;color:#202022;-webkit-text-stroke:0.05px currentColor;'>515,356</span>
<span class='t' style='left:826.20px;top:518.10px;font-size:12.5px;font-weight:400;color:#202022;-webkit-text-stroke:0.05px currentColor;'>13.5%</span>
<span class='t' style='left:921.50px;top:518.10px;font-size:12.5px;font-weight:400;color:#202022;-webkit-text-stroke:0.05px currentColor;'>512,533</span>
<span class='t' style='left:1030.50px;top:518.10px;font-size:12.5px;font-weight:400;color:#202022;-webkit-text-stroke:0.05px currentColor;'>12%</span>
<span class='t' style='left:547.00px;top:549.10px;font-size:12.5px;font-weight:400;color:#202022;-webkit-text-stroke:0.05px currentColor;'>India</span>
<span class='t' style='left:652.00px;top:549.10px;font-size:12.5px;font-weight:400;color:#202022;-webkit-text-stroke:0.05px currentColor;'>N</span>
<span class='t' style='left:717.00px;top:549.10px;font-size:12.5px;font-weight:400;color:#202022;-webkit-text-stroke:0.05px currentColor;'>423,623</span>
<span class='t' style='left:826.20px;top:549.10px;font-size:12.5px;font-weight:400;color:#202022;-webkit-text-stroke:0.05px currentColor;'>44.1%</span>
<span class='t' style='left:921.50px;top:549.10px;font-size:12.5px;font-weight:400;color:#202022;-webkit-text-stroke:0.05px currentColor;'>514,323</span>
<span class='t' style='left:1030.50px;top:549.10px;font-size:12.5px;font-weight:400;color:#202022;-webkit-text-stroke:0.05px currentColor;'>72%</span>
<span class='t' style='left:547.00px;top:580.10px;font-size:12.5px;font-weight:400;color:#202022;-webkit-text-stroke:0.05px currentColor;'>Thailand</span>
<span class='t' style='left:652.00px;top:580.10px;font-size:12.5px;font-weight:400;color:#202022;-webkit-text-stroke:0.05px currentColor;'>N</span>
<span class='t' style='left:717.00px;top:580.10px;font-size:12.5px;font-weight:400;color:#202022;-webkit-text-stroke:0.05px currentColor;'>411,512</span>
<span class='t' style='left:826.20px;top:580.10px;font-size:12.5px;font-weight:400;color:#202022;-webkit-text-stroke:0.05px currentColor;'>2.5%</span>
<span class='t' style='left:921.50px;top:580.10px;font-size:12.5px;font-weight:400;color:#202022;-webkit-text-stroke:0.05px currentColor;'>353,233</span>
<span class='t' style='left:1030.50px;top:580.10px;font-size:12.5px;font-weight:400;color:#202022;-webkit-text-stroke:0.05px currentColor;'>63%</span>
<span class='t' style='left:547.00px;top:611.10px;font-size:12.5px;font-weight:400;color:#202022;-webkit-text-stroke:0.05px currentColor;'>Malaysia</span>
<span class='t' style='left:652.00px;top:611.10px;font-size:12.5px;font-weight:400;color:#202022;-webkit-text-stroke:0.05px currentColor;'>N</span>
<span class='t' style='left:717.00px;top:611.10px;font-size:12.5px;font-weight:400;color:#202022;-webkit-text-stroke:0.05px currentColor;'>398,252</span>
<span class='t' style='left:826.20px;top:611.10px;font-size:12.5px;font-weight:400;color:#202022;-webkit-text-stroke:0.05px currentColor;'>87.23%</span>
<span class='t' style='left:921.50px;top:611.10px;font-size:12.5px;font-weight:400;color:#202022;-webkit-text-stroke:0.05px currentColor;'>252,151</span>
<span class='t' style='left:1030.50px;top:611.10px;font-size:12.5px;font-weight:400;color:#202022;-webkit-text-stroke:0.05px currentColor;'>5.5%</span>
<span class='t' style='left:547.00px;top:642.10px;font-size:12.5px;font-weight:400;color:#202022;-webkit-text-stroke:0.05px currentColor;'>Singapore</span>
<span class='t' style='left:652.00px;top:642.10px;font-size:12.5px;font-weight:400;color:#202022;-webkit-text-stroke:0.05px currentColor;'>Y</span>
<span class='t' style='left:717.00px;top:642.10px;font-size:12.5px;font-weight:400;color:#202022;-webkit-text-stroke:0.05px currentColor;'>352,115</span>
<span class='t' style='left:826.20px;top:642.10px;font-size:12.5px;font-weight:400;color:#202022;-webkit-text-stroke:0.05px currentColor;'>53%</span>
<span class='t' style='left:921.50px;top:642.10px;font-size:12.5px;font-weight:400;color:#202022;-webkit-text-stroke:0.05px currentColor;'>182,182</span>
<span class='t' style='left:1030.50px;top:642.10px;font-size:12.5px;font-weight:400;color:#202022;-webkit-text-stroke:0.05px currentColor;'>92.4%</span>
<span class='t' style='left:547.00px;top:673.10px;font-size:12.5px;font-weight:400;color:#202022;-webkit-text-stroke:0.05px currentColor;'>Japan</span>
<span class='t' style='left:652.00px;top:673.10px;font-size:12.5px;font-weight:400;color:#202022;-webkit-text-stroke:0.05px currentColor;'>N</span>
<span class='t' style='left:717.00px;top:673.10px;font-size:12.5px;font-weight:400;color:#202022;-webkit-text-stroke:0.05px currentColor;'>283,123</span>
<span class='t' style='left:826.20px;top:673.10px;font-size:12.5px;font-weight:400;color:#202022;-webkit-text-stroke:0.05px currentColor;'>12%</span>
<span class='t' style='left:921.50px;top:673.10px;font-size:12.5px;font-weight:400;color:#202022;-webkit-text-stroke:0.05px currentColor;'>100,122</span>
<span class='t' style='left:1030.50px;top:673.10px;font-size:12.5px;font-weight:400;color:#202022;-webkit-text-stroke:0.05px currentColor;'>33.2%</span>
<span class='t' style='left:547.00px;top:704.10px;font-size:12.5px;font-weight:400;color:#202022;-webkit-text-stroke:0.05px currentColor;'>Taiwan</span>
<span class='t' style='left:652.00px;top:704.10px;font-size:12.5px;font-weight:400;color:#202022;-webkit-text-stroke:0.05px currentColor;'>N</span>
<span class='t' style='left:717.00px;top:704.10px;font-size:12.5px;font-weight:400;color:#202022;-webkit-text-stroke:0.05px currentColor;'>18,152</span>
<span class='t' style='left:826.20px;top:704.10px;font-size:12.5px;font-weight:400;color:#202022;-webkit-text-stroke:0.05px currentColor;'>53%</span>
<span class='t' style='left:921.50px;top:704.10px;font-size:12.5px;font-weight:400;color:#202022;-webkit-text-stroke:0.05px currentColor;'>34,232</span>
<span class='t' style='left:1030.50px;top:704.10px;font-size:12.5px;font-weight:400;color:#202022;-webkit-text-stroke:0.05px currentColor;'>7.3%</span>
<span class='t' style='left:547.00px;top:735.10px;font-size:12.5px;font-weight:400;color:#202022;-webkit-text-stroke:0.05px currentColor;'>Vietnam</span>
<span class='t' style='left:652.00px;top:735.10px;font-size:12.5px;font-weight:400;color:#202022;-webkit-text-stroke:0.05px currentColor;'>Y</span>
<span class='t' style='left:717.00px;top:735.10px;font-size:12.5px;font-weight:400;color:#202022;-webkit-text-stroke:0.05px currentColor;'>1,242</span>
<span class='t' style='left:826.20px;top:735.10px;font-size:12.5px;font-weight:400;color:#202022;-webkit-text-stroke:0.05px currentColor;'>34.3%</span>
<span class='t' style='left:921.50px;top:735.10px;font-size:12.5px;font-weight:400;color:#202022;-webkit-text-stroke:0.05px currentColor;'>4,231</span>
<span class='t' style='left:1030.50px;top:735.10px;font-size:12.5px;font-weight:400;color:#202022;-webkit-text-stroke:0.05px currentColor;'>9.5%</span>
<div class='b' style='left:379px;top:364.9px;width:203.5px;height:120.2px;background:#fdfcfe;border:1.3px solid #a3a2a5;box-sizing:border-box'></div>
<div class='b' style='left:43px;top:748.7px;width:1145px;height:11px;background:#f3f2f4'></div>
<div class='b' style='left:43px;top:759.6px;width:1157px;height:1px;background:#dcdbde'></div>
<div class='b' style='left:43px;top:748px;width:1145px;height:1px;background:#dcdbde'></div>
<div class='b' style='left:59px;top:748px;width:433px;height:1px;background:#7d7c7f'></div>
<div class='b' style='left:46px;top:750px;width:319px;height:8.3px;background:#bfbec1'></div>
<svg class='ic' style='left:1148px;top:751px;width:4.5px;height:7px;' viewBox='9.0 7.0 5.0 10.0' preserveAspectRatio='none'><path d='M14 7l-5 5 5 5V7z' fill='#5f5f63'/></svg>
<svg class='ic' style='left:1165px;top:751px;width:4.5px;height:7px;' viewBox='10.0 7.0 5.0 10.0' preserveAspectRatio='none'><path d='M10 17l5-5-5-5v10z' fill='#5f5f63'/></svg>
<div class='b' style='left:1188px;top:753px;width:12px;height:1px;background:#dcdbde'></div>
<div class='b' style='left:0px;top:760.6px;width:1200px;height:35.4px;background:#f6f5f7'></div>
<div class='b' style='left:24.4px;top:778.2px;width:9.6px;height:2px;background:#5f5f63'></div>
<div class='b' style='left:28.2px;top:774.4px;width:2px;height:9.6px;background:#5f5f63'></div>
<svg class='ic' style='left:51px;top:772.4px;width:13px;height:13.6px' viewBox='0 0 13 13.6'><rect y='0' width='13' height='1.6' fill='#5f5f63'/><rect y='4' width='13' height='1.6' fill='#5f5f63'/><rect y='8' width='13' height='1.6' fill='#5f5f63'/><rect y='12' width='13' height='1.6' fill='#5f5f63'/></svg>
<div class='b' style='left:77.4px;top:766.4px;width:82.2px;height:25.2px;background:#fdfcfe;border:1px solid #8a898c;border-radius:2px;box-sizing:border-box'></div>
<svg class='ic' style='left:139px;top:777px;width:7.400000000000006px;height:3.6000000000000227px;' viewBox='7.0 10.0 10.0 5.0' preserveAspectRatio='none'><path d='M7 10l5 5 5-5z' fill='#202124'/></svg>
<div class='b' style='left:163.4px;top:766.4px;width:187.2px;height:25.2px;background:#fdfcfe;border:1px solid #8a898c;border-radius:2px;box-sizing:border-box'></div>
<svg class='ic' style='left:170px;top:773px;width:14.4px;height:13px' viewBox='0 0 14.4 13'>
<ellipse cx='7.2' cy='2.2' rx='7.2' ry='2.2' fill='#5f5f63'/>
<path d='M0 3.6 Q7.2 7.6 14.4 3.6 V6.2 Q7.2 10.2 0 6.2Z' fill='#5f5f63'/>
<path d='M0 7.6 Q7.2 11.6 14.4 7.6 V10.8 Q7.2 15 0 10.8Z' fill='#5f5f63'/></svg>
<svg class='ic' style='left:334px;top:777px;width:6.600000000000023px;height:3.6000000000000227px;' viewBox='7.0 10.0 10.0 5.0' preserveAspectRatio='none'><path d='M7 10l5 5 5-5z' fill='#202124'/></svg>
<div class='b' style='left:356px;top:766.4px;width:82px;height:25.2px;background:#69676a;border-radius:2px'></div>
<svg class='ic' style='left:418.6px;top:777px;width:6.399999999999977px;height:3.6000000000000227px;' viewBox='7.0 10.0 10.0 5.0' preserveAspectRatio='none'><path d='M7 10l5 5 5-5z' fill='#ffffff'/></svg>
<div class='b' style='left:1197px;top:121px;width:3px;height:675px;background:linear-gradient(to right,rgba(0,0,0,0),rgba(0,0,0,0.10))'></div>
<span class='t' style='left:397.74px;top:382.25px;font-size:15.29px;font-weight:400;color:#616164;transform:scaleX(1.0147);transform-origin:0 0;'>Passengers flown</span>
<span class='t' style='left:396.81px;top:406.50px;font-size:34.78px;font-weight:400;color:#1e1e20;transform:scaleX(0.9712);transform-origin:0 0;'>2,252,512</span>
<span class='t' style='left:397.74px;top:455.60px;font-size:13.19px;font-weight:400;color:#616164;transform:scaleX(1.0063);transform-origin:0 0;'>+6.7% from last year</span>
<span class='t' style='left:84.67px;top:774.00px;font-size:13.04px;font-weight:400;color:#5f5f63;transform:scaleX(0.9302);transform-origin:0 0;'>Sheet 1</span>
<span class='t' style='left:191.00px;top:774.00px;font-size:13.04px;font-weight:400;color:#5f5f63;transform:scaleX(0.9448);transform-origin:0 0;'>flightRecords_2017-2018</span>
<span class='t' style='left:364.40px;top:774.00px;font-size:13.04px;font-weight:400;color:#ffffff;transform:scaleX(0.9583);transform-origin:0 0;'>Analysis</span>
</body></html>
